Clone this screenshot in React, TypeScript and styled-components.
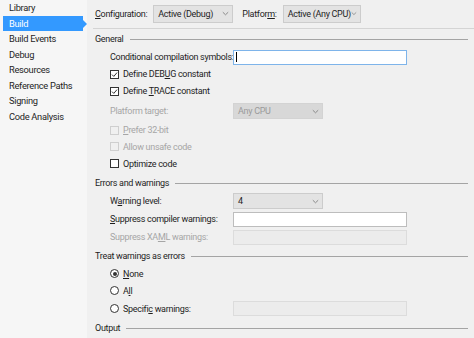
import React from "react";
import styled, { createGlobalStyle } from "styled-components";

const Global = createGlobalStyle`
  html, body { margin: 0; padding: 0; }
  body {
    width: 474px; height: 338px; overflow: hidden;
    background: #f0f0f0;
    font-family: Roboto, "Noto Sans", sans-serif;
    font-size: 9px;
    letter-spacing: -0.3px;
    color: #1e1e1e;
  }
  u { text-decoration: underline; text-underline-offset: 1px; }
`;

const Page = styled.div`
  display: flex;
  width: 474px;
  height: 338px;
  overflow: hidden;
`;

const Sidebar = styled.nav`
  width: 87px;
  flex: none;
  display: flex;
  flex-direction: column;
  background: #f6f6f6;
  font-size: 9.3px;
`;

const NavItem = styled.div<{ $active?: boolean }>`
  position: relative;
  height: 15.5px;
  line-height: 15.5px;
  margin-left: 3px;
  margin-right: 4px;
  padding-left: 6px;
  white-space: nowrap;
  background: ${(p) => (p.$active ? "#3399ff" : "transparent")};
  color: ${(p) => (p.$active ? "#ffffff" : "#1e1e1e")};
  &::after {
    content: "";
    display: ${(p) => (p.$active ? "block" : "none")};
    position: absolute;
    right: -4px;
    top: 4px;
    border-top: 4px solid transparent;
    border-bottom: 4px solid transparent;
    border-left: 4px solid #3399ff;
  }
`;

const Main = styled.div`
  flex: 1;
  display: flex;
  flex-direction: column;
  padding-left: 6px;
`;

const TopBar = styled.div`
  height: 28px;
  display: flex;
  align-items: center;
  padding-left: 2px;
  border-bottom: 1px solid #d4d4d4;
`;

const TopLabel = styled.span`
  margin-right: 6px;
  white-space: nowrap;
`;

const Select = styled.div<{ $w: number; $h?: number; $disabled?: boolean }>`
  width: ${(p) => p.$w}px;
  height: ${(p) => p.$h ?? 18}px;
  box-sizing: border-box;
  display: flex;
  align-items: center;
  justify-content: space-between;
  padding: 0 3px 0 4px;
  background: ${(p) => (p.$disabled ? "#d8d8d8" : "#e3e3e3")};
  border: 1px solid ${(p) => (p.$disabled ? "#d3d3d3" : "#cccccc")};
  color: ${(p) => (p.$disabled ? "#9a9a9a" : "#1e1e1e")};
  margin-right: 9px;
  white-space: nowrap;
  flex: none;
`;

const Chevron = () => (
  <svg width="7" height="5" viewBox="0 0 7 5">
    <path d="M0.8 1.2 L3.5 3.8 L6.2 1.2" fill="none" stroke="#8a8a8a" strokeWidth="1" />
  </svg>
);

const Header = styled.div<{ $h?: number; $mt?: number }>`
  height: ${(p) => p.$h ?? 20}px;
  margin-top: ${(p) => p.$mt ?? 0}px;
  display: flex;
  align-items: center;
  padding-left: 2px;
  margin-right: 6px;
  &::after {
    content: "";
    flex: 1;
    height: 1px;
    background: #a4a4a4;
    margin-left: 6px;
    margin-top: 1px;
  }
`;

const Row = styled.div<{ $h: number; $disabled?: boolean }>`
  height: ${(p) => p.$h}px;
  display: flex;
  align-items: center;
  padding-left: 17px;
  color: ${(p) => (p.$disabled ? "#a6a6a6" : "#1e1e1e")};
  white-space: nowrap;
`;

const Label = styled.span`
  width: 123px;
  flex: none;
  display: flex;
  align-items: center;
`;

const Text = styled.span`
  white-space: pre;
`;

const Input = styled.div<{ $focused?: boolean; $disabled?: boolean }>`
  width: 174px;
  height: 15px;
  box-sizing: border-box;
  background: ${(p) => (p.$disabled ? "#ececec" : "#ffffff")};
  border: 1px solid ${(p) => (p.$focused ? "#7eb4ea" : p.$disabled ? "#dcdcdc" : "#bdbdbd")};
  display: flex;
  align-items: center;
  padding-left: 2px;
`;

const Caret = styled.span`
  width: 1px;
  height: 10px;
  background: #000;
`;

const Box = styled.span<{ $disabled?: boolean }>`
  width: 9px;
  height: 9px;
  box-sizing: border-box;
  border: 1px solid ${(p) => (p.$disabled ? "#cfcfcf" : "#333333")};
  background: ${(p) => (p.$disabled ? "#f0f0f0" : "#ffffff")};
  margin-right: 4px;
  display: flex;
  align-items: center;
  justify-content: center;
  flex: none;
`;

const Radio = styled.span<{ $on?: boolean }>`
  width: 9px;
  height: 9px;
  box-sizing: border-box;
  border: 1px solid #333333;
  border-radius: 50%;
  background: #ffffff;
  margin-right: 4px;
  display: flex;
  align-items: center;
  justify-content: center;
  flex: none;
  &::after {
    content: "";
    display: ${(p) => (p.$on ? "block" : "none")};
    width: 4px;
    height: 4px;
    border-radius: 50%;
    background: #333333;
  }
`;

const Check = () => (
  <svg width="7" height="7" viewBox="0 0 7 7">
    <path d="M1 3.6 L2.8 5.4 L6 1.6" fill="none" stroke="#333" strokeWidth="1" />
  </svg>
);

const navItems = ["Library", "Build", "Build Events", "Debug", "Resources", "Reference Paths", "Signing", "Code Analysis"];

export default function App() {
  return (
    <>
      <Global />
      <Page>
        <Sidebar>
          {navItems.map((n) => (
            <NavItem key={n} $active={n === "Build"}>{n}</NavItem>
          ))}
        </Sidebar>
        <Main>
          <TopBar>
            <TopLabel><u>C</u>onfiguration:</TopLabel>
            <Select $w={80}>Active (Debug)<Chevron /></Select>
            <TopLabel>Platfor<u>m</u>:</TopLabel>
            <Select $w={78}>Active (Any CPU)<Chevron /></Select>
          </TopBar>

          <Header $h={21}>General</Header>
          <Row $h={17}>
            <Label>Conditional compilation symbols:</Label>
            <Input $focused><Caret /></Input>
          </Row>
          <Row $h={17}><Box><Check /></Box><Text>Define DEB<u>U</u>G constant</Text></Row>
          <Row $h={18}><Box><Check /></Box><Text>Define <u>T</u>RACE constant</Text></Row>
          <Row $h={22} $disabled>
            <Label>Platform target:</Label>
            <Select $w={90} $h={16} $disabled>Any CPU<Chevron /></Select>
          </Row>
          <Row $h={17} $disabled><Box $disabled /><Text><u>P</u>refer 32-bit</Text></Row>
          <Row $h={17} $disabled><Box $disabled /><Text>Allow unsafe code</Text></Row>
          <Row $h={17}><Box /><Text>Optimize code</Text></Row>

          <Header $h={20} $mt={1}>Errors and warnings</Header>
          <Row $h={18}>
            <Label><Text>W<u>a</u>rning level:</Text></Label>
            <Select $w={90} $h={16}>4<Chevron /></Select>
          </Row>
          <Row $h={18}>
            <Label><Text><u>S</u>uppress compiler warnings:</Text></Label>
            <Input />
          </Row>
          <Row $h={19} $disabled>
            <Label><Text>Suppress XA<u>M</u>L warnings:</Text></Label>
            <Input $disabled />
          </Row>

          <Header $h={19}>Treat warnings as errors</Header>
          <Row $h={17}><Radio $on /><Text><u>N</u>one</Text></Row>
          <Row $h={18}><Radio /><Text>A<u>l</u>l</Text></Row>
          <Row $h={18}>
            <Label><Radio /><Text>Specifi<u>c</u> warnings:</Text></Label>
            <Input $disabled />
          </Row>
          <Header $h={20} $mt={1}>Output</Header>
        </Main>
      </Page>
    </>
  );
}
